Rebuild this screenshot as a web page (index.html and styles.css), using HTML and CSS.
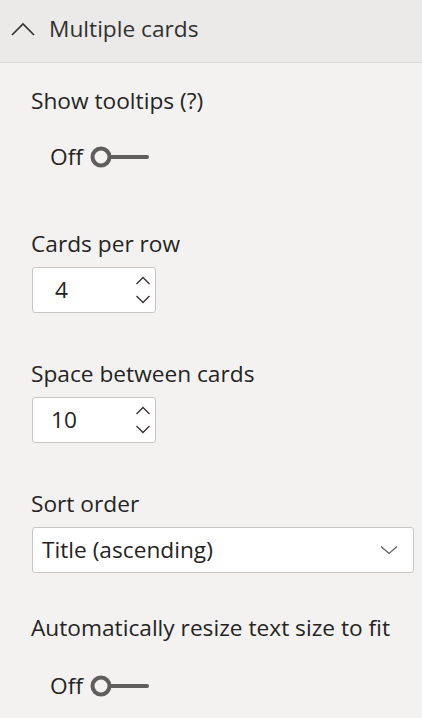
FILE: index.html
```html
<!DOCTYPE html>
<html>
<head>
<meta charset="utf-8">
<link rel="stylesheet" href="styles.css">
</head>
<body>
<div class="header">
  <svg class="hdr-chev" width="24" height="14" viewBox="0 0 24 14"><path d="M1 13 L12 2 L23 13" fill="none" stroke="#323130" stroke-width="1.6"/></svg>
  <span class="hdr-title">Multiple cards</span>
</div>
<div class="content">
  <div class="label first">Show tooltips (?)</div>
  <div class="toggle">
    <span class="toggle-text">Off</span>
    <svg width="62" height="26" viewBox="0 0 62 26"><circle cx="11" cy="13" r="8.5" fill="none" stroke="#605e5c" stroke-width="4"/><line x1="20" y1="13" x2="57" y2="13" stroke="#605e5c" stroke-width="4" stroke-linecap="round"/></svg>
  </div>

  <div class="label gap">Cards per row</div>
  <div class="spin">
    <span class="spin-val">4</span>
    <div class="spin-arrows">
      <svg width="16" height="9" viewBox="0 0 16 9"><path d="M1.5 8 L8 1.5 L14.5 8" fill="none" stroke="#323130" stroke-width="1.3"/></svg>
      <svg width="16" height="9" viewBox="0 0 16 9"><path d="M1.5 1 L8 7.5 L14.5 1" fill="none" stroke="#323130" stroke-width="1.3"/></svg>
    </div>
  </div>

  <div class="label gap2">Space between cards</div>
  <div class="spin">
    <span class="spin-val ten">10</span>
    <div class="spin-arrows">
      <svg width="16" height="9" viewBox="0 0 16 9"><path d="M1.5 8 L8 1.5 L14.5 8" fill="none" stroke="#323130" stroke-width="1.3"/></svg>
      <svg width="16" height="9" viewBox="0 0 16 9"><path d="M1.5 1 L8 7.5 L14.5 1" fill="none" stroke="#323130" stroke-width="1.3"/></svg>
    </div>
  </div>

  <div class="label gap2">Sort order</div>
  <div class="dropdown">
    <span class="dd-val">Title (ascending)</span>
    <svg width="18" height="10" viewBox="0 0 18 10"><path d="M1 1.5 L9 8.5 L17 1.5" fill="none" stroke="#605e5c" stroke-width="1.2"/></svg>
  </div>

  <div class="label gap3">Automatically resize text size to fit</div>
  <div class="toggle t2">
    <span class="toggle-text">Off</span>
    <svg width="62" height="26" viewBox="0 0 62 26"><circle cx="11" cy="13" r="8.5" fill="none" stroke="#605e5c" stroke-width="4"/><line x1="20" y1="13" x2="57" y2="13" stroke="#605e5c" stroke-width="4" stroke-linecap="round"/></svg>
  </div>
</div>
</body>
</html>
```
FILE: styles.css
```css
html, body {
  margin: 0;
  padding: 0;
}
body {
  background: #f3f2f1;
  font-family: "Open Sans", "Noto Sans", sans-serif;
  color: #252423;
  width: 422px;
  height: 718px;
  overflow: hidden;
}
.header {
  background: #ebeae8;
  border-bottom: 1.5px solid #dcdbd9;
  display: flex;
  align-items: center;
  padding-left: 11px;
  box-sizing: border-box;
  height: 63px;
}
.hdr-chev {
  margin-top: -4px;
}
.hdr-title {
  font-size: 22.7px;
  margin-left: 14px;
  line-height: 30px;
  margin-top: -4px;
  color: #323130;
}
.content {
  padding-left: 31px;
  display: flex;
  flex-direction: column;
}
.label {
  font-size: 22.7px;
  line-height: 30px;
  height: 30px;
  white-space: nowrap;
}
.label.first { margin-top: 23px; }
.label.gap { margin-top: 57px; }
.label.gap2 { margin-top: 46px; }
.label.gap3 { margin-top: 40px; }
.toggle {
  margin-top: 26px;
  height: 30px;
  display: flex;
  align-items: center;
  padding-left: 19px;
}
.toggle.t2 { margin-top: 28px; }
.toggle-text {
  font-size: 22.7px;
  line-height: 30px;
  margin-right: 7px;
}
.spin {
  margin-top: 8px;
  width: 124px;
  height: 46px;
  box-sizing: border-box;
  margin-left: 1px;
  background: #ffffff;
  border: 1.5px solid #c8c6c4;
  border-radius: 3px;
  display: flex;
  align-items: center;
  justify-content: space-between;
  padding: 0 4px 0 22px;
}
.spin-val {
  font-size: 22.7px;
  line-height: 30px;
}
.spin-val.ten { margin-left: -4px; }
.spin-arrows {
  display: flex;
  flex-direction: column;
  gap: 10px;
}
.dropdown {
  margin-top: 8px;
  margin-left: 1px;
  width: 382px;
  height: 46px;
  box-sizing: border-box;
  background: #ffffff;
  border: 1.5px solid #c8c6c4;
  border-radius: 3px;
  display: flex;
  align-items: center;
  justify-content: space-between;
  padding: 0 15px 0 9px;
}
.dd-val {
  font-size: 22.7px;
  line-height: 30px;
}
```
